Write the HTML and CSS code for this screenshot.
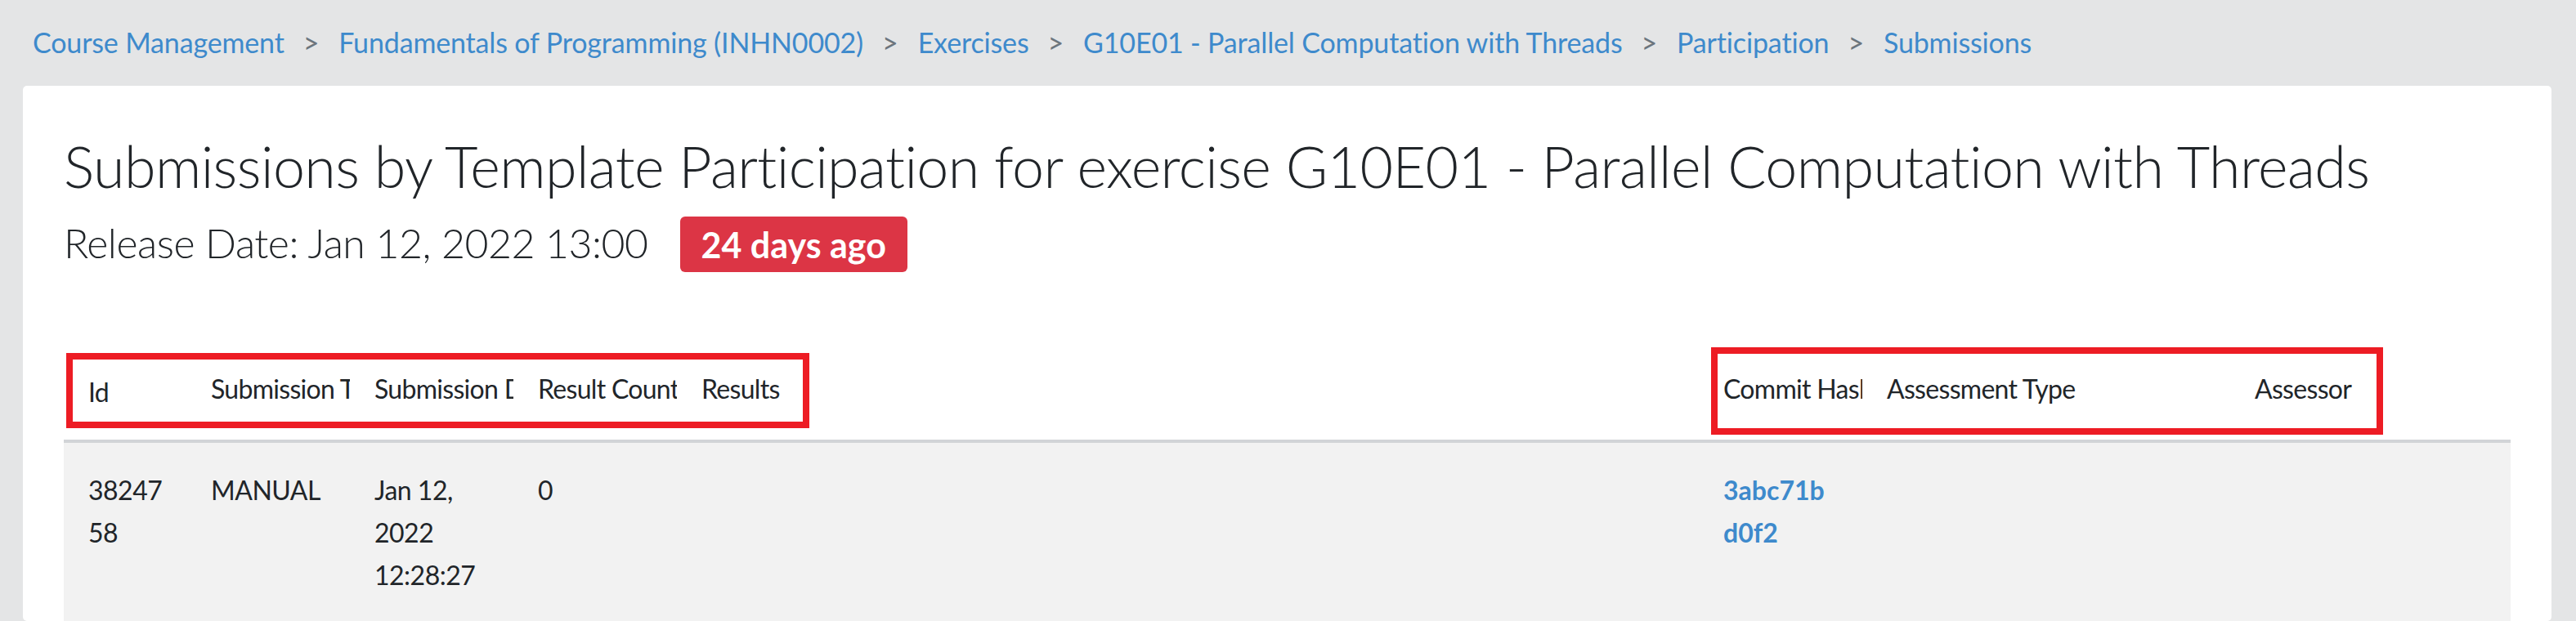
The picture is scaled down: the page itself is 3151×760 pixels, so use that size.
FILE: index.html
```html
<!DOCTYPE html>
<html lang="en">
<head>
<meta charset="utf-8">
<title>Submissions</title>
<link rel="stylesheet" href="styles.css">
</head>
<body>
<nav class="crumbs">
  <a class="crumb">Course Management</a><span class="sep">&gt;</span>
  <a class="crumb">Fundamentals of Programming (INHN0002)</a><span class="sep">&gt;</span>
  <a class="crumb">Exercises</a><span class="sep">&gt;</span>
  <a class="crumb">G10E01 - Parallel Computation with Threads</a><span class="sep">&gt;</span>
  <a class="crumb">Participation</a><span class="sep">&gt;</span>
  <a class="crumb">Submissions</a>
</nav>
<main class="card">
  <h1 class="title">Submissions by Template Participation for exercise G10E01 - Parallel Computation with Threads</h1>
  <div class="release"><span class="release-text">Release Date: Jan 12, 2022 13:00</span><span class="badge">24 days ago</span></div>
  <div class="table">
    <div class="thead cols">
      <div class="th th-id"><span>Id</span></div>
      <div class="th"><span>Submission Type</span></div>
      <div class="th"><span>Submission Date</span></div>
      <div class="th"><span>Result Count</span></div>
      <div class="th"><span>Results</span></div>
      <div class="th th-hash"><span>Commit Hash</span></div>
      <div class="th"><span>Assessment Type</span></div>
      <div class="th"><span>Assessor</span></div>
      <div class="mark mark-left"></div>
      <div class="mark mark-right"></div>
    </div>
    <div class="row cols">
      <div class="td">3824758</div>
      <div class="td">MANUAL</div>
      <div class="td">Jan 12, 2022 12:28:27</div>
      <div class="td">0</div>
      <div class="td"></div>
      <div class="td td-hash"><a class="hash">3abc71bd0f2</a></div>
      <div class="td"></div>
      <div class="td"></div>
    </div>
  </div>
</main>
</body>
</html>
```

FILE: styles.css
```css
* { box-sizing: border-box; }
html, body { margin: 0; }
body {
  background: #e4e5e6;
  font-family: Lato, "Open Sans", sans-serif;
  color: #212529;
  width: 3151px;
  height: 760px;
  overflow: hidden;
}
.crumbs {
  display: flex;
  align-items: baseline;
  height: 105px;
  padding: 32px 0 0 40px;
  font-size: 34px;
  letter-spacing: -0.15px;
  line-height: 1.2;
}
.crumb { color: #3e8acc; text-decoration: none; white-space: nowrap; }
.sep { color: #6c757d; margin: 0 24px 0 23px; }
.card {
  background: #fff;
  margin: 0 30px 0 28px;
  border-radius: 5px;
  padding: 53px 50px 0;
  height: 655px;
  overflow: hidden;
}
.title {
  font-size: 70px;
  font-weight: 300;
  letter-spacing: -0.6px;
  margin: 0;
  line-height: 90px;
  white-space: nowrap;
}
.release {
  display: flex;
  align-items: center;
  gap: 39px;
  margin-top: 17px;
}
.release-text {
  font-size: 50px;
  font-weight: 300;
  letter-spacing: -0.5px;
  margin-bottom: 4px;
  white-space: nowrap;
}
.badge {
  background: #dc3545;
  color: #fff;
  font-weight: 700;
  font-size: 43px;
  border-radius: 6px;
  height: 68px;
  padding: 0 26px;
  display: flex;
  align-items: center;
  white-space: nowrap;
}
.table { margin-top: 67px; }
.cols {
  display: grid;
  grid-template-columns: 150px 200px 200px 200px 1250px 200px 450px 1fr;
}
.thead {
  position: relative;
  height: 142px;
  border-bottom: 4px solid #d2d4d7;
  align-items: end;
  font-size: 32px;
  letter-spacing: -0.7px;
  line-height: 1.2;
}
.th { padding: 0 4px 43px 30px; white-space: nowrap; overflow: hidden; }
.th-id { padding-bottom: 39px; }
.th-hash { padding-right: 12px; }
.row {
  background: #f2f2f2;
  font-size: 32px;
  letter-spacing: -0.5px;
  line-height: 52px;
  height: 218px;
}
.td { padding: 32px 21px 0 30px; overflow-wrap: anywhere; }
.td-hash { padding-right: 39px; }
.hash { color: #3e8acc; font-weight: 700; letter-spacing: 0; }
.mark { position: absolute; border: 8px solid #ed1c24; }
.mark-left { left: 3px; top: 32px; width: 909px; height: 92px; }
.mark-right { left: 2015px; top: 25px; width: 822px; height: 107px; }
```
